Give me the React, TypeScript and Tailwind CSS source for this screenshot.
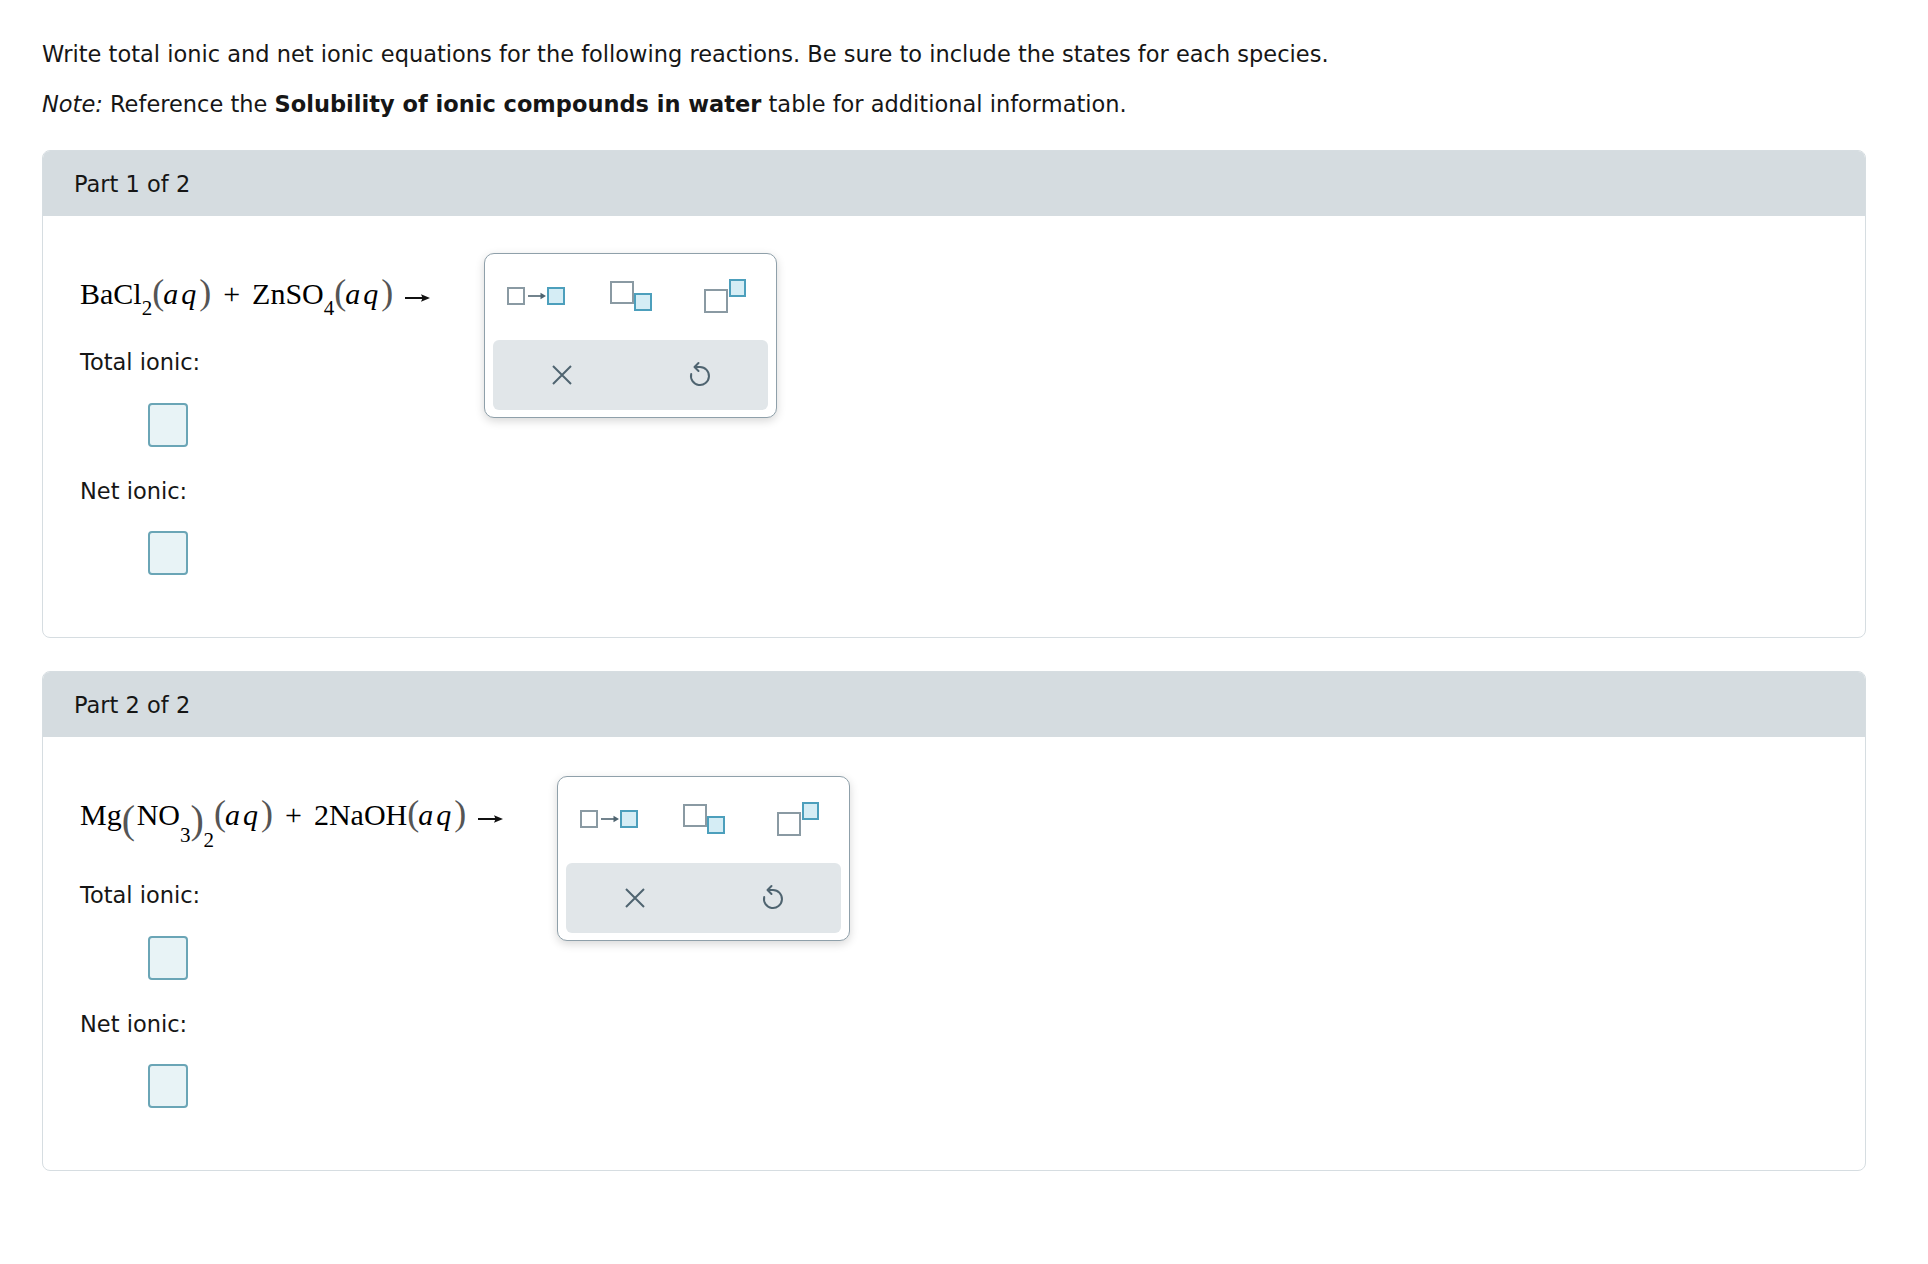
import React from "react";

const serif = "font-['Liberation_Serif','Times_New_Roman',serif]";

function Sub({ children, cls }: { children: React.ReactNode; cls: string }) {
  return <span className={`text-[21px] leading-none ${cls}`}>{children}</span>;
}

function P({ c, cls = "" }: { c: string; cls?: string }) {
  return (
    <span className={`inline-block w-[10px] text-center text-[36px] leading-none text-[#555] ${cls}`}>{c}</span>
  );
}

function AQ() {
  return (
    <>
      <P c="(" />
      <span className="italic ml-[1px]">a</span>
      <span className="italic ml-[3px]">q</span>
      <P c=")" cls="ml-[3px]" />
    </>
  );
}

function Arrow() {
  return (
    <svg width="25" height="12" viewBox="0 0 25 12" className="inline-block align-baseline ml-[14px]">
      <path d="M0 6 H18" stroke="#111" strokeWidth="2" />
      <path d="M25 6 L16 2.2 L17.6 6 L16 9.8 Z" fill="#111" />
    </svg>
  );
}

function Palette() {
  const gray = "#8a9aa3";
  const teal = "#4c9fbc";
  const tealFill = "#d5edf5";
  const dark = "#4f6470";
  return (
    <div className="w-[293px] h-[165px] rounded-[10px] border border-[#8fa0aa] bg-white shadow-[0_3px_10px_rgba(0,0,0,0.16)] flex flex-col">
      <div className="h-[86px] px-[4px] pb-[3px] grid grid-cols-3 items-center justify-items-center">
        <svg width="58" height="18" viewBox="0 0 58 18">
          <rect x="1" y="1" width="16" height="16" fill="white" stroke={gray} strokeWidth="2" />
          <path d="M21 9 H35" stroke={dark} strokeWidth="1.6" />
          <path d="M39 9 L33.5 5.8 L33.5 12.2 Z" fill={dark} />
          <rect x="41" y="1" width="16" height="16" fill={tealFill} stroke={teal} strokeWidth="2" />
        </svg>
        <svg width="42" height="30" viewBox="0 0 42 30">
          <rect x="1" y="1" width="22" height="21" fill="white" stroke={gray} strokeWidth="2" />
          <rect x="25" y="13" width="16" height="16" fill={tealFill} stroke={teal} strokeWidth="2" />
        </svg>
        <svg width="42" height="34" viewBox="0 0 42 34">
          <rect x="1" y="11" width="22" height="22" fill="white" stroke={gray} strokeWidth="2" />
          <rect x="26" y="1" width="15" height="16" fill={tealFill} stroke={teal} strokeWidth="2" />
        </svg>
      </div>
      <div className="mx-[8px] h-[70px] rounded-[6px] bg-[#e1e6e9] grid grid-cols-2 items-center justify-items-center">
        <svg width="22" height="20" viewBox="0 0 22 20">
          <path d="M2 1 L20 19 M20 1 L2 19" stroke={dark} strokeWidth="2" />
        </svg>
        <svg width="24" height="28" viewBox="0 0 24 28">
          <path d="M10.5 2 L6.5 6 L10.5 10" fill="none" stroke={dark} strokeWidth="2" strokeLinecap="round" strokeLinejoin="round" />
          <path d="M7 6 H12 A9 9 0 1 1 3.2 13" fill="none" stroke={dark} strokeWidth="2" strokeLinecap="round" />
        </svg>
      </div>
    </div>
  );
}

function InputBox() {
  return <div className="ml-[68px] w-[40px] h-[44px] rounded-[4px] border-2 border-[#6aa5b6] bg-[#e8f3f6]" />;
}

function Equation1() {
  return (
    <div className={`relative w-fit h-[40px] leading-[40px] whitespace-nowrap text-[30px] text-black ${serif}`}>
      <span>BaCl</span>
      <Sub cls="align-[-11px]">2</Sub>
      <AQ />
      <span className="ml-[14px] mr-[12px]">+</span>
      <span>ZnSO</span>
      <Sub cls="align-[-11px]">4</Sub>
      <AQ />
      <Arrow />
      <div className="absolute left-full top-[-21px] ml-[54px] font-['DejaVu_Sans',sans-serif]">
        <Palette />
      </div>
    </div>
  );
}

function Equation2() {
  return (
    <div className={`relative w-fit h-[52px] leading-[40px] whitespace-nowrap text-[30px] text-black ${serif}`}>
      <span>Mg</span>
      <span className="inline-block w-[13px] text-center text-[40px] leading-none align-[-8px] text-[#555]">(</span>
      <span className="ml-[2px]">NO</span>
      <Sub cls="align-[-17px]">3</Sub>
      <span className="inline-block w-[13px] text-center text-[40px] leading-none align-[-8px] text-[#555]">)</span>
      <Sub cls="align-[-22px]">2</Sub>
      <AQ />
      <span className="ml-[14px] mr-[12px]">+</span>
      <span>2NaOH</span>
      <AQ />
      <Arrow />
      <div className="absolute left-full top-[-19px] ml-[54px] font-['DejaVu_Sans',sans-serif]">
        <Palette />
      </div>
    </div>
  );
}

function Card({ title, eq, className }: { title: string; eq: React.ReactNode; className: string }) {
  return (
    <div className={`rounded-[8px] border border-[#d6dde1] ${className}`}>
      <div className="h-[65px] rounded-t-[7px] bg-[#d5dce0] flex items-center pl-[31px] text-[22.5px] leading-[30px]">
        {title}
      </div>
      <div className="pl-[37px] pt-[58px] pb-[62px]">
        {eq}
        <div className="mt-[33px] text-[22.5px] leading-[30px]">Total ionic:</div>
        <div className="mt-[26px]">
          <InputBox />
        </div>
        <div className="mt-[29px] text-[22.5px] leading-[30px]">Net ionic:</div>
        <div className="mt-[25px]">
          <InputBox />
        </div>
      </div>
    </div>
  );
}

export default function App() {
  return (
    <div className="min-h-screen bg-white font-['DejaVu_Sans',sans-serif] text-[#161616]">
      <div className="ml-[42px] w-[1824px] pt-[39px]">
        <p className="text-[22.5px] leading-[30px]">
          Write total ionic and net ionic equations for the following reactions. Be sure to include the states for each species.
        </p>
        <p className="mt-[20px] text-[22.5px] leading-[30px]">
          <i>Note:</i> Reference the <b>Solubility of ionic compounds in water</b> table for additional information.
        </p>
        <Card title="Part 1 of 2" eq={<Equation1 />} className="mt-[31px]" />
        <Card title="Part 2 of 2" eq={<Equation2 />} className="mt-[33px]" />
      </div>
    </div>
  );
}
